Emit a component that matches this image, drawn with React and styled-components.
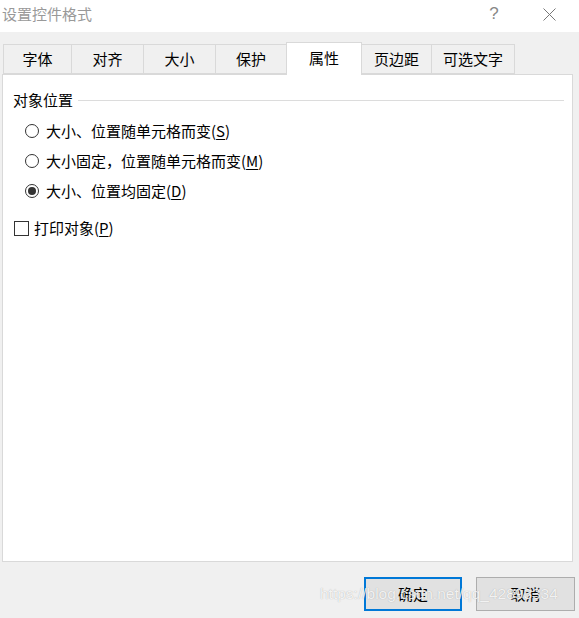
import styled, { createGlobalStyle } from 'styled-components';

const GlobalStyle = createGlobalStyle`
  html, body {
    margin: 0;
    padding: 0;
    background: #f0f0f0;
  }
  body {
    font-family: 'Noto Sans CJK SC', 'Noto Sans', sans-serif;
    font-size: 15px;
    color: #000;
  }
`;

const Dialog = styled.div`
  position: relative;
  width: 579px;
  height: 618px;
  display: flex;
  flex-direction: column;
  background: #f0f0f0;
  overflow: hidden;
`;

const TitleBar = styled.div`
  height: 32px;
  flex: none;
  display: flex;
  align-items: center;
  background: #fff;
  padding-left: 2px;
`;

const Title = styled.div`
  flex: 1;
  color: #999;
  font-size: 15px;
  line-height: 20px;
  margin-top: -5px;
`;

const TitleButton = styled.div`
  width: ${(p) => p.$w}px;
  height: 32px;
  display: flex;
  align-items: center;
  justify-content: center;
  color: #888;
  font-family: 'Liberation Sans', Arial, sans-serif;
  font-size: 17px;
  margin-top: -4px;
`;

const Body = styled.div`
  flex: 1;
  display: flex;
  flex-direction: column;
  padding: 10px 6px 0 2px;
`;

const TabStrip = styled.div`
  display: flex;
  align-items: flex-end;
  height: 32px;
  padding-left: 1px;
  position: relative;
  z-index: 1;
`;

const Tab = styled.div`
  width: ${(p) => p.$w}px;
  height: ${(p) => (p.$active ? 33 : 30)}px;
  margin-bottom: ${(p) => (p.$active ? -1 : 0)}px;
  margin-left: -1px;
  box-sizing: border-box;
  border: 1px solid #d9d9d9;
  border-bottom: ${(p) => (p.$active ? 'none' : '1px solid #d9d9d9')};
  background: ${(p) => (p.$active ? '#fff' : '#f0f0f0')};
  display: flex;
  align-items: center;
  justify-content: center;
  padding-bottom: ${(p) => (p.$active ? 3 : 0)}px;
  font-size: 15px;
  line-height: 20px;
  &:first-child {
    margin-left: 0;
  }
`;

const Panel = styled.div`
  height: 488px;
  box-sizing: border-box;
  background: #fff;
  border: 1px solid #d9d9d9;
  padding: 15px 8px 0 10px;
`;

const GroupHead = styled.div`
  display: flex;
  align-items: center;
  gap: 5px;
  height: 20px;
  line-height: 20px;
  &::after {
    content: '';
    flex: 1;
    height: 1px;
    background: #dcdcdc;
  }
`;

const OptionList = styled.div`
  display: flex;
  flex-direction: column;
  padding: 11px 0 0 12px;
  gap: 10px;
`;

const Option = styled.label`
  display: flex;
  align-items: center;
  height: 20px;
  line-height: 20px;
  gap: 7px;
`;

const Radio = styled.span`
  width: 14px;
  height: 14px;
  box-sizing: border-box;
  border: 1px solid #333;
  border-radius: 50%;
  display: flex;
  align-items: center;
  justify-content: center;
  &::after {
    content: '';
    width: 8px;
    height: 8px;
    border-radius: 50%;
    background: ${(p) => (p.$checked ? '#333' : 'transparent')};
  }
`;

const CheckRow = styled.label`
  display: flex;
  align-items: center;
  height: 20px;
  line-height: 20px;
  gap: 5px;
  margin-top: 17px;
  margin-left: 1px;
`;

const Checkbox = styled.span`
  width: 15px;
  height: 15px;
  box-sizing: border-box;
  border: 1px solid #333;
`;

const Key = styled.span`
  text-decoration: underline;
  text-underline-offset: 2px;
`;

const Footer = styled.div`
  display: flex;
  justify-content: flex-end;
  gap: 14px;
  padding: 15px 0 0 0;
  margin-right: -2px;
`;

const Button = styled.button`
  width: ${(p) => (p.$primary ? 98 : 99)}px;
  height: 34px;
  box-sizing: border-box;
  background: #e1e1e1;
  border: ${(p) => (p.$primary ? '2px solid #0078d7' : '1px solid #adadad')};
  font-family: 'Noto Sans CJK SC', sans-serif;
  font-size: 15px;
  line-height: 20px;
  color: #000;
  padding: 0;
`;

const Watermark = styled.div`
  position: absolute;
  left: 320px;
  top: 585px;
  font-family: 'Liberation Sans', Arial, sans-serif;
  font-size: 15.5px;
  color: rgba(255, 255, 255, 0.85);
  text-shadow: 0 0 1px rgba(120, 120, 120, 0.6);
  white-space: nowrap;
  pointer-events: none;
`;

const tabs = [
  { label: '字体', w: 69 },
  { label: '对齐', w: 73 },
  { label: '大小', w: 73 },
  { label: '保护', w: 72 },
  { label: '属性', w: 76, active: true },
  { label: '页边距', w: 71 },
  { label: '可选文字', w: 84 },
];

const options = [
  { text: '大小、位置随单元格而变', key: 'S' },
  { text: '大小固定，位置随单元格而变', key: 'M' },
  { text: '大小、位置均固定', key: 'D', checked: true },
];

export default function App() {
  return (
    <>
      <GlobalStyle />
      <Dialog>
        <TitleBar>
          <Title>设置控件格式</Title>
          <TitleButton $w={50}>?</TitleButton>
          <TitleButton $w={60}>
            <svg width="13" height="13" viewBox="0 0 13 13">
              <path d="M0.5 0.5L12.5 12.5M12.5 0.5L0.5 12.5" stroke="#777" strokeWidth="1" fill="none" />
            </svg>
          </TitleButton>
        </TitleBar>
        <Body>
          <TabStrip>
            {tabs.map((t) => (
              <Tab key={t.label} $w={t.w} $active={t.active}>
                {t.label}
              </Tab>
            ))}
          </TabStrip>
          <Panel>
            <GroupHead>对象位置</GroupHead>
            <OptionList>
              {options.map((o) => (
                <Option key={o.key}>
                  <Radio $checked={o.checked} />
                  <span>
                    {o.text}(<Key>{o.key}</Key>)
                  </span>
                </Option>
              ))}
            </OptionList>
            <CheckRow>
              <Checkbox />
              <span>
                打印对象(<Key>P</Key>)
              </span>
            </CheckRow>
          </Panel>
          <Footer>
            <Button $primary>确定</Button>
            <Button>取消</Button>
          </Footer>
        </Body>
        <Watermark>https://blog.csdn.net/qq_42893334</Watermark>
      </Dialog>
    </>
  );
}
